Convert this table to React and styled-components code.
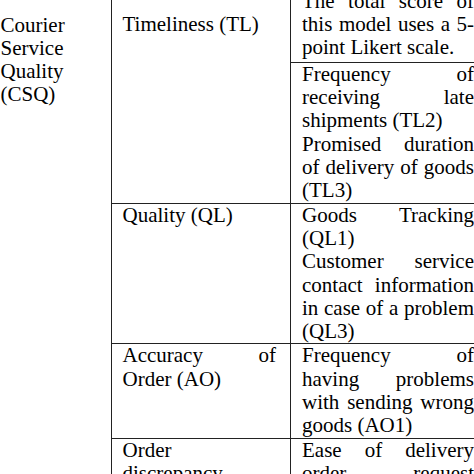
import React from "react";
import styled, { createGlobalStyle } from "styled-components";

const Global = createGlobalStyle`
  html, body {
    margin: 0;
    padding: 0;
    background: #ffffff;
  }
  body {
    width: 474px;
    height: 474px;
    overflow: hidden;
    font-family: "Liberation Serif", "Times New Roman", serif;
    color: #000000;
  }
`;

const RULE = "1px solid #222222";

const Table = styled.div`
  display: grid;
  grid-template-columns: 112px 179px 193px;
  margin-top: -10.5px;
  font-size: 21px;
  line-height: 23.3px;
`;

const Construct = styled.div`
  grid-column: 1;
  grid-row: 1 / span 4;
  border-right: ${RULE};
  padding: 24px 0 0 0.5px;
  text-align: left;
`;

const Dimension = styled.div`
  grid-column: 2;
  grid-row: ${(p) => p.$row};
  border-right: ${RULE};
  border-bottom: ${(p) => (p.$last ? "none" : RULE)};
  padding: ${(p) => (p.$first ? "23.5px" : "0")} 14px 0 10.5px;
  text-align: justify;
`;

const Indicators = styled.div`
  grid-column: 3;
  grid-row: ${(p) => p.$row};
  display: flex;
  flex-direction: column;
  border-bottom: ${(p) => (p.$last ? "none" : RULE)};
`;

const Block = styled.div`
  padding: 0 10px ${(p) => p.$pb || "0"} 11px;
  border-bottom: ${(p) => (p.$divider ? RULE : "none")};
  text-align: justify;
`;

const Para = styled.p`
  margin: 0;
`;

export default function App() {
  return (
    <>
      <Global />
      <Table>
        <Construct>
          Courier
          <br />
          Service
          <br />
          Quality
          <br />
          (CSQ)
        </Construct>

        <Dimension $row={1} $first>
          Timeliness (TL)
        </Dimension>
        <Indicators $row={1}>
          <Block $divider $pb="2.5px">
            <Para>
              The total score of this model uses a 5-point Likert scale.
            </Para>
          </Block>
          <Block>
            <Para>Frequency of receiving late shipments (TL2)</Para>
            <Para>Promised duration of delivery of goods (TL3)</Para>
          </Block>
        </Indicators>

        <Dimension $row={2}>Quality (QL)</Dimension>
        <Indicators $row={2}>
          <Block>
            <Para>Goods Tracking (QL1)</Para>
            <Para>
              Customer service contact information in case of a problem (QL3)
            </Para>
          </Block>
        </Indicators>

        <Dimension $row={3}>Accuracy of Order (AO)</Dimension>
        <Indicators $row={3}>
          <Block>
            <Para>
              Frequency of having problems with sending wrong goods (AO1)
            </Para>
          </Block>
        </Indicators>

        <Dimension $row={4} $last>
          Order discrepancy
          <br />
          (OD)
        </Dimension>
        <Indicators $row={4} $last>
          <Block>
            <Para>Ease of delivery order request submission (OD1)</Para>
          </Block>
        </Indicators>
      </Table>
    </>
  );
}
